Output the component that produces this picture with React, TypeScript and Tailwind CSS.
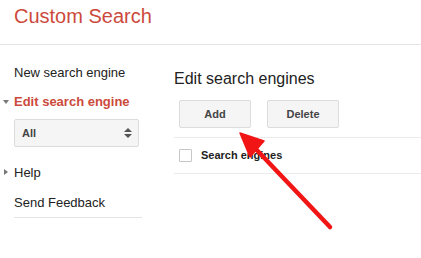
export default function App() {
  return (
    <div className="relative w-[421px] h-[258px] bg-white overflow-hidden font-['Liberation_Sans',Arial,sans-serif] text-[#222]">
      <header className="h-[45px] border-b border-[#e5e5e5] pl-[14px] pt-[4px]">
        <h1 className="text-[20px] leading-[24px] text-[#cc4a3c]">Custom Search</h1>
      </header>

      <div className="flex">
        <nav className="w-[142px] pt-[20px]">
          <div className="pl-[14px] text-[13px] leading-[16px] h-[16px]">New search engine</div>
          <div className="relative mt-[13px] pl-[14px] text-[13px] leading-[16px] font-bold text-[#cc4a3c]">
            <span className="absolute left-[3px] top-[6px] w-0 h-0 border-l-[3px] border-r-[3px] border-t-[4px] border-l-transparent border-r-transparent border-t-[#777]" />
            Edit search engine
          </div>
          <div className="ml-[14px] mt-[9px] w-[125px] h-[28px] rounded-[2px] border border-[#dcdcdc] bg-[#f5f5f5] flex items-center justify-between pl-[7px] pr-[6px]">
            <span className="text-[11px] font-bold text-[#444]">All</span>
            <span className="flex flex-col gap-[2px]">
              <span className="w-0 h-0 border-l-[4px] border-r-[4px] border-b-[4px] border-l-transparent border-r-transparent border-b-[#555]" />
              <span className="w-0 h-0 border-l-[4px] border-r-[4px] border-t-[4px] border-l-transparent border-r-transparent border-t-[#555]" />
            </span>
          </div>
          <div className="relative mt-[18px] pl-[14px] text-[13px] leading-[16px]">
            <span className="absolute left-[4px] top-[4px] w-0 h-0 border-t-[3px] border-b-[3px] border-l-[4px] border-t-transparent border-b-transparent border-l-[#777]" />
            Help
          </div>
          <div className="mt-[14px] pl-[14px] text-[13px] leading-[16px]">Send Feedback</div>
          <div className="ml-[14px] mt-[6px] border-b border-[#e5e5e5]" />
        </nav>

        <main className="flex-1 ml-[32px] pt-[24px]">
          <h2 className="text-[16px] leading-[20px] text-[#222]">Edit search engines</h2>
          <div className="flex gap-[16px] pl-[5px] mt-[11px]">
            <button className="w-[72px] h-[28px] rounded-[2px] border border-[#dcdcdc] bg-[#f5f5f5] text-[11px] font-bold text-[#444]">Add</button>
            <button className="w-[72px] h-[28px] rounded-[2px] border border-[#dcdcdc] bg-[#f5f5f5] text-[11px] font-bold text-[#444]">Delete</button>
          </div>
          <div className="mt-[9px] border-t border-[#ebebeb]" />
          <div className="h-[36px] flex items-center pl-[5px] border-b border-[#ebebeb]">
            <span className="w-[13px] h-[13px] border border-[#c6c6c6] bg-white rounded-[1px]" />
            <span className="ml-[9px] text-[11px] font-bold text-[#222]">Search engines</span>
          </div>
        </main>
      </div>

      <svg className="absolute inset-0 pointer-events-none" width="421" height="258" viewBox="0 0 421 258">
        <line x1="331" y1="228" x2="257" y2="151" stroke="#9a9a9a" strokeWidth="2" opacity="0.5" />
        <line x1="330" y1="227" x2="252" y2="145" stroke="#f21515" strokeWidth="4.5" strokeLinecap="round" />
        <polygon points="240,133 264,141 250,157" fill="#f21515" stroke="#f21515" strokeWidth="1.5" strokeLinejoin="round" />
      </svg>
    </div>
  );
}
